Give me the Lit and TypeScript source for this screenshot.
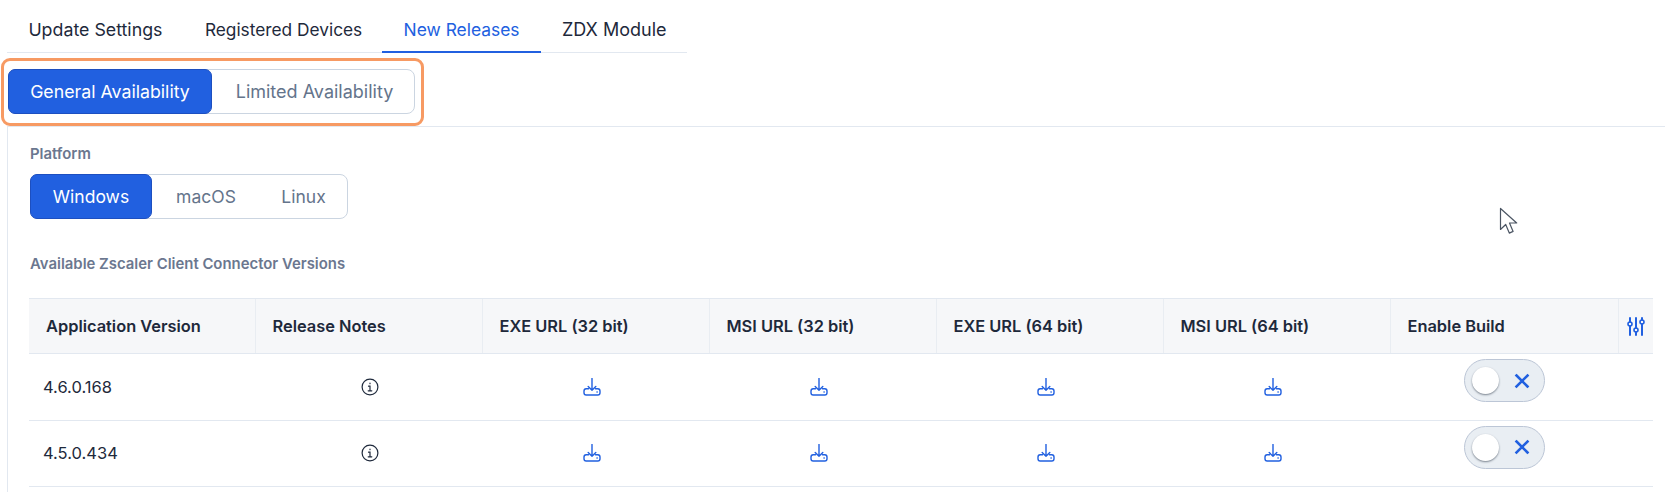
import { LitElement, html, css } from "lit";
import { customElement } from "lit/decorators.js";

const download = html`<svg class="dl" width="18" height="18" viewBox="0 0 18 18" fill="none" stroke="#2160e0" stroke-width="1.4" stroke-linecap="round" stroke-linejoin="round">
  <path d="M9 .4v11.8M5.2 8.6L9 12.3l3.8-3.7"/>
  <path d="M5.6 10.8H3.2Q1 10.8 1 13v1.8Q1 17 3.2 17h11.6q2.2 0 2.2-2.2V13q0-2.2-2.2-2.2h-2.4"/>
  <path d="M14 14h.2" stroke-width="1.5"/>
</svg>`;

const info = html`<svg class="info" width="18" height="18" viewBox="0 0 18 18" fill="none" stroke="#1e293b" stroke-width="1.2" stroke-linecap="round">
  <circle cx="9" cy="9" r="7.9"/>
  <path d="M9 5.2v.5M7.5 8.2H9v4.6M7.2 12.8h3.6"/>
</svg>`;

const sliders = html`<svg width="18" height="19" viewBox="0 0 18 19" fill="none" stroke="#2160e0" stroke-width="2" stroke-linecap="round">
  <path d="M3 1v4M3 9v9M9 1v10M9 15v3M15 1v2M15 7v11"/>
  <circle cx="3" cy="7" r="2" stroke-width="1.6"/>
  <circle cx="9" cy="13" r="2" stroke-width="1.6"/>
  <circle cx="15" cy="5" r="2" stroke-width="1.6"/>
</svg>`;

const cross = html`<svg width="16" height="16" viewBox="0 0 16 16" fill="none" stroke="#2160e0" stroke-width="2.6" stroke-linecap="square">
  <path d="M2.5 2.5l11 11M13.5 2.5l-11 11"/>
</svg>`;

const rows = ["4.6.0.168", "4.5.0.434"];
const heads = ["Application Version", "Release Notes", "EXE URL (32 bit)", "MSI URL (32 bit)", "EXE URL (64 bit)", "MSI URL (64 bit)", "Enable Build"];

@customElement("app-root")
export class AppRoot extends LitElement {
  static styles = css`
    :host { display: block; height: 492px; overflow: hidden; background: #fff; font-family: Inter, "Noto Sans", sans-serif; color: #1e293b; position: relative; }
    * { box-sizing: border-box; }
    .tabs { display: flex; width: 680px; height: 53px; margin-left: 7px; border-bottom: 1px solid #e2e8f0; }
    .tab { padding: 0 21.4px; height: 53px; font-size: 17.4px; line-height: 59px; white-space: nowrap; }
    .tab.first { font-size: 17.8px; padding-right: 21px; }
    .tab.second { font-size: 17.3px; padding-right: 20px; }
    .tab.last { font-size: 18px; }
    .tab.active { color: #2160e0; border-bottom: 2px solid #2160e0; padding-right: 21px; }
    .ring { width: 423px; height: 68px; margin: 5px 0 0 1px; padding: 8px 0 0 4px; border: 3px solid #f79a63; border-radius: 9px; }
    .ring .seg { width: 407px; font-size: 17.75px; }
    .seg { display: flex; height: 45px; background: #fff; border: 1px solid #cbd5e1; border-radius: 8px; font-size: 17.5px; align-items: stretch; color: #64748b; }
    .seg div { display: flex; align-items: center; justify-content: center; white-space: nowrap; }
    .seg .on { background: #2160e0; color: #fff; border-radius: 7px; border: 1px solid #1d4fc0; margin: -1px 0 -1px -1px; }
    .ga { width: 204px; }
    .ring .seg .la { flex: 1; font-size: 18px; padding-left: 3px; }
    .panel { margin: 0 0 0 7px; border-top: 1px solid #e2e8f0; border-left: 1px solid #e2e8f0; height: 366px; padding: 17px 12px 0 22px; }
    .label { font-size: 14.9px; font-weight: 600; line-height: 20px; color: #6b778f; }
    .platform { width: 318px; margin-top: 10px; }
    .win { width: 122px; }
    .mac { width: 108px; }
    .lin { flex: 1; }
    .avail { margin-top: 35px; }
    table { border-collapse: collapse; table-layout: fixed; width: 1624px; margin: 24px 0 0 -1px; }
    th { height: 55px; background: #f6f7f9; text-align: left; font-weight: 600; font-size: 16.4px; padding: 0 0 0 17px; border-top: 1px solid #e2e8f0; border-bottom: 1px solid #e2e8f0; border-left: 1px solid #e9edf2; color: #1e293b; white-space: nowrap; }
    th:first-child { border-left: 0; }
    th.cfg { padding: 0 0 0 8px; }
    th svg { display: block; }
    td { height: 66.5px; border-bottom: 1px solid #e2e8f0; padding: 0; font-size: 16.5px; color: #1e293b; }
    td.ver { padding-left: 14px; }
    td.c { text-align: center; }
    td.i { padding-left: 2px; }
    td.d { padding-right: 7px; }
    td.c svg { vertical-align: middle; margin-bottom: 2px; }
    td.t { vertical-align: top; padding: 5px 0 0 74px; }
    .toggle { display: flex; align-items: center; width: 81px; height: 43px; background: #e9eef3; border: 1px solid #bcc6d6; border-radius: 22px; padding-left: 7px; }
    .knob { width: 27px; height: 27px; background: #fff; border-radius: 50%; box-shadow: 0 1px 2px rgba(30,41,59,.55); margin-right: 15px; }
    .cursor { position: absolute; left: 1499px; top: 207px; }
  `;

  render() {
    return html`
      <div class="tabs">
        <div class="tab first">Update Settings</div>
        <div class="tab second">Registered Devices</div>
        <div class="tab active">New Releases</div>
        <div class="tab last">ZDX Module</div>
      </div>
      <div class="ring">
        <div class="seg"><div class="on ga">General Availability</div><div class="la">Limited Availability</div></div>
      </div>
      <div class="panel">
        <div class="label">Platform</div>
        <div class="seg platform"><div class="on win">Windows</div><div class="mac">macOS</div><div class="lin">Linux</div></div>
        <div class="label avail">Available Zscaler Client Connector Versions</div>
        <table>
          <colgroup><col style="width:226px"/><col style="width:227px"/><col style="width:227px"/><col style="width:227px"/><col style="width:227px"/><col style="width:227px"/><col style="width:228px"/><col style="width:35px"/></colgroup>
          <thead><tr>${heads.map((h) => html`<th>${h}</th>`)}<th class="cfg">${sliders}</th></tr></thead>
          <tbody>
            ${rows.map((r) => html`<tr>
              <td class="ver">${r}</td>
              <td class="c i">${info}</td>
              ${[0, 1, 2, 3].map(() => html`<td class="c d">${download}</td>`)}
              <td class="t"><div class="toggle"><div class="knob"></div>${cross}</div></td>
              <td></td>
            </tr>`)}
            <tr><td></td><td></td><td></td><td></td><td></td><td></td><td class="t"><div class="toggle"><div class="knob"></div>${cross}</div></td><td></td></tr>
          </tbody>
        </table>
      </div>
      <svg class="cursor" width="20" height="30" viewBox="0 0 20 30" fill="#fff" stroke="#4b5563" stroke-width="1.2" stroke-linejoin="round">
        <path d="M1.5 1.5v21l5.2-5 3.6 8.6 3.8-1.7-3.6-8.4h7.2z"/>
      </svg>
    `;
  }
}
